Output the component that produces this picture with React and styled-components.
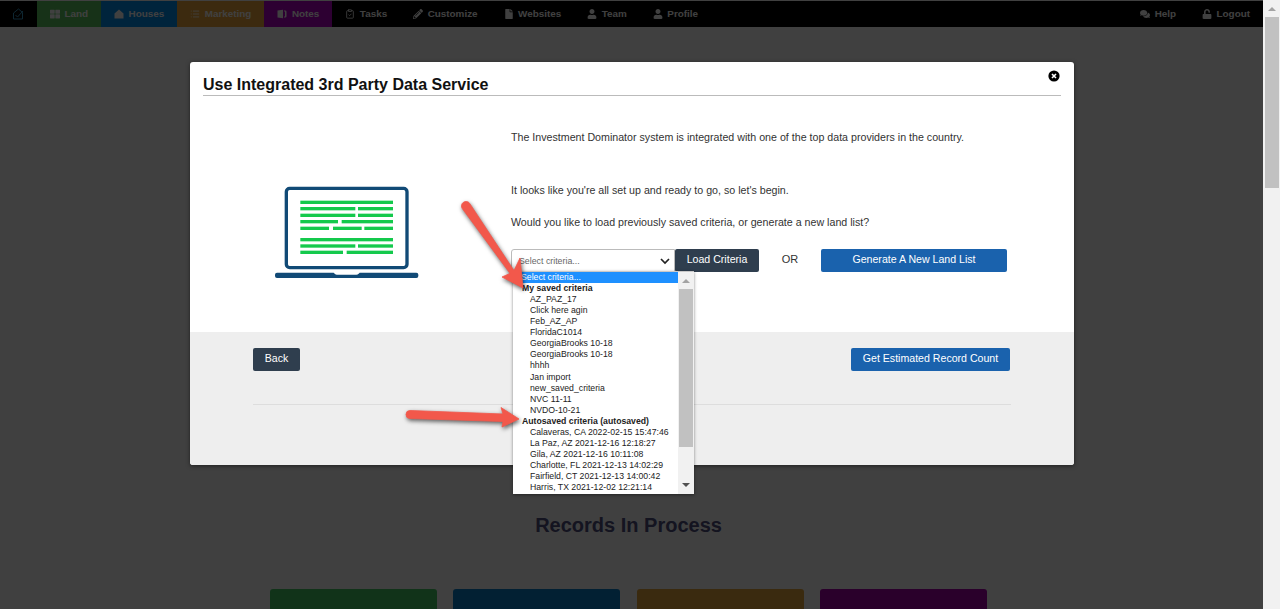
import React from "react";
import styled, { createGlobalStyle } from "styled-components";
import { FaThLarge, FaPencilAlt, FaFile, FaUser, FaComments, FaUnlock } from "react-icons/fa";
import { List as ListIcon, ClipboardCheck } from "lucide-react";

const Global = createGlobalStyle`
  html, body { margin: 0; padding: 0; height: 609px; overflow: hidden; background: #fff; }
  * { box-sizing: border-box; }
  body { font-family: "Liberation Sans", Arial, sans-serif; color: #333; }
`;

const Shell = styled.div`display: flex; width: 1280px; height: 609px; overflow: hidden;`;
const Page = styled.div`position: relative; flex: 1; height: 609px; overflow: hidden; padding-top: 1px;`;
const Nav = styled.nav`display: flex; height: 26px; background: #000;`;
const NavItem = styled.a`
  display: flex; align-items: center; gap: 4.5px; padding: 0 13px 1px;
  background: ${p => p.$bg || "transparent"}; color: #fff;
  font-size: 9.9px; font-weight: 700; white-space: nowrap;
  ${p => p.$push && "margin-left: auto;"}
  svg { width: 10px; height: 10px; flex: none; }
`;
const Logo = styled.div`width: 37px; display: flex; align-items: center; justify-content: center; padding-right: 1px;`;
const Background = styled.main`display: flex; flex-direction: column; align-items: center; padding-top: 486px;`;
const Heading = styled.h2`margin: 0 0 52px -6px; font-size: 20px; font-weight: 700; color: #50507f; line-height: 24px;`;
const Cards = styled.div`display: flex; gap: 16.5px; margin-left: -6px;`;
const Card = styled.div`width: 167px; height: 120px; border-radius: 3px 3px 0 0; background: ${p => p.$bg};`;

const Dim = styled.div`position: absolute; inset: 0; background: rgba(0,0,0,.75);`;
const Modal = styled.section`
  position: absolute; left: 190px; top: 62px; width: 884px; height: 403px;
  background: #fff; border-radius: 3px; box-shadow: 0 1px 4px rgba(0,0,0,.5);
  display: flex; flex-direction: column; overflow: hidden;
`;
const ModalHead = styled.header`margin: 0 13px; height: 34px; border-bottom: 1px solid #bbb; display: flex; align-items: flex-end; justify-content: space-between;`;
const Title = styled.h1`margin: 0; font-size: 16px; font-weight: 700; color: #111; line-height: 20px;`;
const Close = styled.button`position: absolute; right: 14px; top: 8px; width: 12px; height: 12px; border: 0; padding: 0; background: none; display: block;`;
const ModalBody = styled.div`height: 236px; display: grid; grid-template-columns: 321px 1fr;`;
const Art = styled.div`padding: 90px 0 0 85px;`;
const Content = styled.div`padding-top: 35px;`;
const Para = styled.p`margin: 0 0 ${p => p.$mb}px; font-size: 10.67px; line-height: 13px; color: #333;`;
const Controls = styled.div`display: flex; align-items: flex-start; margin-top: 20px;`;
const FakeSelect = styled.div`
  width: 164px; height: 23px; border: 1px solid #bbb; border-radius: 3px 0 0 3px; background: #fff;
  display: flex; align-items: center; justify-content: space-between; padding: 0 3px 0 7px;
  font-size: 8.8px; color: #666;
`;
const Btn = styled.button`
  height: 23px; border: 0; border-radius: 2px; color: #fff; font: 10.6px "Liberation Sans", Arial, sans-serif;
  background: ${p => p.$bg}; width: ${p => p.$w}px; padding: 0 0 3px; margin-right: ${p => p.$mr || 0}px;
`;
const Or = styled.span`width: 62px; text-align: center; font-size: 11px; line-height: 21px; color: #333;`;
const Footer = styled.footer`flex: 1; background: #eee; padding: 16px 63px 0;`;
const FootRow = styled.div`display: flex; justify-content: space-between; padding-bottom: 33px; border-bottom: 1px solid #ddd;`;

const List = styled.div`
  position: absolute; left: 513px; top: 271px; width: 181px; height: 223px;
  background: #fff; box-shadow: 0 1px 3px rgba(0,0,0,.45); border-top: 1px solid #c8c8c8;
  display: flex; overflow: hidden;
`;
const Options = styled.div`flex: 1; overflow: hidden; font-size: 8.7px; line-height: 11.07px; color: #222;`;
const Opt = styled.div`padding-left: 17px; white-space: nowrap;`;
const OptSel = styled.div`background: #1e90ff; color: #fff; padding-left: 8px; height: 11px;`;
const Group = styled.div`font-weight: 700; padding-left: 9px; white-space: nowrap;`;
const ListBar = styled.div`width: 16px; padding-right: 1px; background: #f1f1f1; display: flex; flex-direction: column; align-items: center; padding-top: 7px;`;
const ListThumb = styled.div`width: 14px; height: 158px; background: #c1c1c1; margin-top: 6px;`;
const TriUp = styled.div`width: 0; height: 0; border: 4px solid transparent; border-top: 0; border-bottom: 4px solid #a3a3a3;`;
const TriDown = styled.div`width: 0; height: 0; border: 4px solid transparent; border-bottom: 0; border-top: 4px solid #505050; margin-top: 36px;`;

const ArrowLayer = styled.svg`position: absolute; left: 0; top: 0; width: 1263px; height: 609px; pointer-events: none; filter: drop-shadow(1px 2px 2px rgba(0,0,0,.6));`;

const Scrollbar = styled.aside`width: 17px; background: #f1f1f1; display: flex; flex-direction: column; align-items: center; padding-top: 7px;`;
const Thumb = styled.div`width: 14px; height: 171px; background: #c1c1c1; margin-top: 6px;`;

const lines = [
  [[122,400]], [[122,287],[295,400]], [[122,287],[295,400]], [[122,235],[246,400]],
  [[122,208],[220,306],[314,400]], [[122,400]], [[122,287],[295,400]], [[122,250],[261,400]],
];
const ys = [99,118,138,157,177,211,230,249];

const Laptop = () => (
  <svg width="146" height="96" viewBox="46 50 438 288" fill="none" style={{ display: "block" }}>
    <rect x="80" y="57" width="362" height="238" rx="10" stroke="#114a76" strokeWidth="10" />
    <path d="M46 316a6 6 0 0 1 6-6h170c4 5 8 6 14 6h50c6 0 10-1 14-6h170a6 6 0 0 1 6 6v4a6 6 0 0 1-6 6H52a6 6 0 0 1-6-6z" fill="#114a76" />
    {lines.flatMap((segs, i) => segs.map(([a, b], j) => (
      <rect key={i + "-" + j} x={a} y={ys[i] - 5} width={b - a} height={10} fill="#14c94c" />
    )))}
  </svg>
);

const HouseIcon = () => (
  <svg viewBox="0 0 10 10" fill="currentColor"><path d="M5 .5 9.5 4.6V9.5H.5V4.6z" /></svg>
);
const NotesIcon = () => (
  <svg viewBox="0 0 10 10" fill="currentColor">
    <path d="M.5 1.5 6 .8v8.4l-5.500-.7z" />
    <path d="M7 1.500h1.200a1.300 1.300 0 0 1 1.300 1.300v4.400a1.300 1.300 0 0 1-1.300 1.300H7V7.500h1V2.500H7z" />
  </svg>
);

const navLeft = [
  ["Land", FaThLarge, "#5bc860"], ["Houses", HouseIcon, "#008ef0"], ["Marketing", ListIcon, "#f0a83c"], ["Notes", NotesIcon, "#b400c8"],
  ["Tasks", ClipboardCheck], ["Customize", FaPencilAlt], ["Websites", FaFile], ["Team", FaUser], ["Profile", FaUser],
];
const saved = ["AZ_PAZ_17","Click here agin","Feb_AZ_AP","FloridaC1014","GeorgiaBrooks 10-18","GeorgiaBrooks 10-18","hhhh","Jan import","new_saved_criteria","NVC 11-11","NVDO-10-21"];
const auto = ["Calaveras, CA 2022-02-15 15:47:46","La Paz, AZ 2021-12-16 12:18:27","Gila, AZ 2021-12-16 10:11:08","Charlotte, FL 2021-12-13 14:02:29","Fairfield, CT 2021-12-13 14:00:42","Harris, TX 2021-12-02 12:21:14"];

export default function App() {
  return (
    <Shell>
      <Global />
      <Page>
        <Nav>
          <Logo>
            <svg width="12" height="12" viewBox="0 0 12 12" fill="none" stroke="#3a9cc8" strokeWidth="1">
              <path d="M1.500 5 6.500 1 10.500 4.500V11H1.500z" /><path d="m3.500 7 2 2 5.500-6" />
            </svg>
          </Logo>
          {navLeft.map(([t, I, bg]) => <NavItem key={t} $bg={bg}><I />{t}</NavItem>)}
          <NavItem $push><FaComments />Help</NavItem>
          <NavItem><FaUnlock />Logout</NavItem>
        </Nav>
        <Background>
          <Heading>Records In Process</Heading>
          <Cards>
            <Card $bg="#46cc66" /><Card $bg="#0a80cc" /><Card $bg="#e6a83e" /><Card $bg="#a800ad" />
          </Cards>
        </Background>
        <Dim />
        <Modal>
          <ModalHead><Title>Use Integrated 3rd Party Data Service</Title></ModalHead>
          <Close aria-label="Close">
            <svg width="12" height="12" viewBox="0 0 12 12"><circle cx="6" cy="6" r="5.6" fill="#000" /><path d="m4 4 4 4M8 4l-4 4" stroke="#fff" strokeWidth="1.6" /></svg>
          </Close>
          <ModalBody>
            <Art><Laptop /></Art>
            <Content>
              <Para $mb={40}>The Investment Dominator system is integrated with one of the top data providers in the country.</Para>
              <Para $mb={19}>It looks like you're all set up and ready to go, so let's begin.</Para>
              <Para $mb={0}>Would you like to load previously saved criteria, or generate a new land list?</Para>
              <Controls>
                <FakeSelect>Select criteria...
                  <svg width="12" height="12" viewBox="0 0 12 12" fill="none" stroke="#222" strokeWidth="1.7"><path d="m2 4 4 4 4-4" /></svg>
                </FakeSelect>
                <Btn $bg="#2f3e4e" $w={84}>Load Criteria</Btn>
                <Or>OR</Or>
                <Btn $bg="#1a62ad" $w={186}>Generate A New Land List</Btn>
              </Controls>
            </Content>
          </ModalBody>
          <Footer>
            <FootRow>
              <Btn $bg="#2f3e4e" $w={47}>Back</Btn>
              <Btn $bg="#1a62ad" $w={159} $mr={1}>Get Estimated Record Count</Btn>
            </FootRow>
          </Footer>
        </Modal>
        <List>
          <Options>
            <OptSel>Select criteria...</OptSel>
            <Group>My saved criteria</Group>
            {saved.map((s, i) => <Opt key={i}>{s}</Opt>)}
            <Group>Autosaved criteria (autosaved)</Group>
            {auto.map(s => <Opt key={s}>{s}</Opt>)}
          </Options>
          <ListBar><TriUp /><ListThumb /><TriDown /></ListBar>
        </List>
        <ArrowLayer viewBox="0 0 1263 609">
          <path d="M469.700 203.400 514 270.600 520 258 523 288 502 277 510 273.400 462.300 208.600A4.500 4.500 0 0 1 469.700 203.400z" fill="#f2584b" stroke="#f2584b" strokeWidth=".8" strokeLinejoin="round" />
          <path d="M410 410.500 503 414 501 407.500 519 419 502 427 503 421.500 410 418.500A4 4 0 0 1 410 410.500z" fill="#f2584b" stroke="#f2584b" strokeWidth=".8" strokeLinejoin="round" />
        </ArrowLayer>
      </Page>
      <Scrollbar><TriUp /><Thumb /></Scrollbar>
    </Shell>
  );
}
